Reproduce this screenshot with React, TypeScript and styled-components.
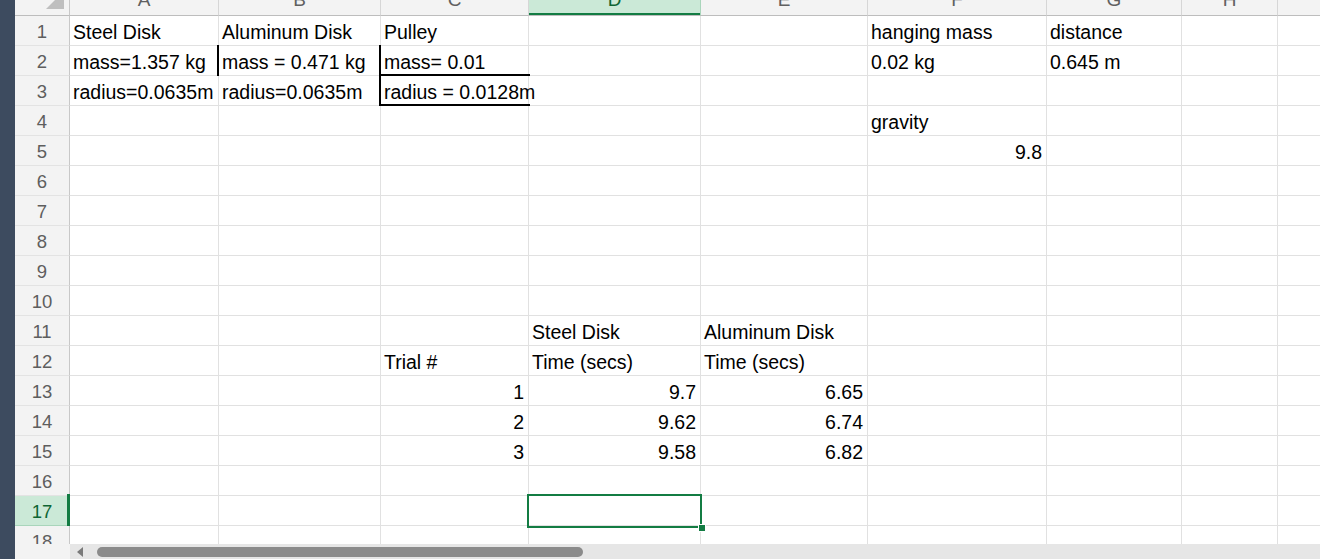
import React from 'react';
import styled, { createGlobalStyle, css } from 'styled-components';

const GlobalStyle = createGlobalStyle`
  html, body { margin: 0; padding: 0; background: #ffffff; }
  body { font-family: 'Liberation Sans', Arial, sans-serif; overflow: hidden; }
`;

const GREEN = '#137c43';
const GREEN_BG = '#cbe9d7';
const GRID = '#e1e1e1';

type Col = { key: string; width: number };
const COLS: Col[] = [
  { key: 'A', width: 149 },
  { key: 'B', width: 162 },
  { key: 'C', width: 148 },
  { key: 'D', width: 172 },
  { key: 'E', width: 167 },
  { key: 'F', width: 179 },
  { key: 'G', width: 135 },
  { key: 'H', width: 96 },
  { key: 'I', width: 120 },
];

type CellData = {
  text: string;
  right?: boolean;
  tl?: boolean;
  tr?: boolean;
  tb?: boolean;
};

const DATA: Record<number, Record<string, CellData>> = {
  1: {
    A: { text: 'Steel Disk' },
    B: { text: 'Aluminum Disk' },
    C: { text: 'Pulley' },
    F: { text: 'hanging mass' },
    G: { text: 'distance' },
  },
  2: {
    A: { text: 'mass=1.357 kg', tr: true },
    B: { text: 'mass = 0.471 kg' },
    C: { text: 'mass= 0.01', tl: true, tb: true },
    F: { text: '0.02 kg' },
    G: { text: '0.645 m' },
  },
  3: {
    A: { text: 'radius=0.0635m' },
    B: { text: 'radius=0.0635m' },
    C: { text: 'radius = 0.0128m', tl: true, tb: true },
  },
  4: { F: { text: 'gravity' } },
  5: { F: { text: '9.8', right: true } },
  11: { D: { text: 'Steel Disk' }, E: { text: 'Aluminum Disk' } },
  12: { C: { text: 'Trial #' }, D: { text: 'Time (secs)' }, E: { text: 'Time (secs)' } },
  13: { C: { text: '1', right: true }, D: { text: '9.7', right: true }, E: { text: '6.65', right: true } },
  14: { C: { text: '2', right: true }, D: { text: '9.62', right: true }, E: { text: '6.74', right: true } },
  15: { C: { text: '3', right: true }, D: { text: '9.58', right: true }, E: { text: '6.82', right: true } },
};

const ROW_COUNT = 18;
const ACTIVE_ROW = 17;
const ACTIVE_COL = 'D';

const Page = styled.div`
  display: flex;
  width: 1320px;
  height: 559px;
  overflow: hidden;
  background: #ffffff;
`;

const SideStrip = styled.div`
  width: 15px;
  flex: none;
  background: #3d4b5f;
`;

const Main = styled.div`
  flex: 1;
  display: flex;
  flex-direction: column;
  min-width: 0;
`;

const Viewport = styled.div`
  height: 544px;
  flex: none;
  overflow: hidden;
`;

const SheetGrid = styled.div`
  display: grid;
  grid-template-columns: 55px ${COLS.map((c) => `${c.width}px`).join(' ')};
  grid-template-rows: 16px repeat(${ROW_COUNT}, 30px);
  font-family: 'Liberation Sans', Arial, sans-serif;
`;

const Corner = styled.div`
  background: #f3f3f3;
  border-right: 1px solid #c8c8c8;
  border-bottom: 1px solid #bdbdbd;
  display: flex;
  justify-content: flex-end;
  align-items: flex-start;
  padding-right: 5px;
  overflow: hidden;
`;

const ColHeader = styled.div<{ $active?: boolean }>`
  position: relative;
  background: ${(p) => (p.$active ? GREEN_BG : '#f3f3f3')};
  border-right: 1px solid ${(p) => (p.$active ? '#a9d5bb' : '#d6d6d6')};
  border-bottom: 1px solid #bdbdbd;
  color: ${(p) => (p.$active ? '#0e6534' : '#606060')};
  font-size: 19px;
  line-height: 15px;
  text-align: center;
  overflow: hidden;
  ${(p) =>
    p.$active &&
    css`
      &::after {
        content: '';
        position: absolute;
        left: -3px;
        right: -2px;
        bottom: -1px;
        height: 3px;
        background: ${GREEN};
      }
    `}
`;

const ColLabel = styled.span`
  display: block;
  transform: translateY(-8px);
`;

const RowHeader = styled.div<{ $active?: boolean }>`
  position: relative;
  background: ${(p) => (p.$active ? GREEN_BG : '#f3f3f3')};
  border-right: 1px solid #c8c8c8;
  border-bottom: 1px solid ${(p) => (p.$active ? '#a9d5bb' : '#e3e3e3')};
  color: ${(p) => (p.$active ? '#0e6534' : '#5e5e5e')};
  font-size: 18.5px;
  line-height: 22px;
  display: flex;
  justify-content: center;
  align-items: flex-end;
  padding-bottom: 2px;
  ${(p) =>
    p.$active &&
    css`
      &::after {
        content: '';
        position: absolute;
        right: -1px;
        top: -2px;
        bottom: -3px;
        width: 3px;
        background: ${GREEN};
      }
    `}
`;

const Cell = styled.div<{ $right?: boolean; $tl?: boolean; $tr?: boolean; $tb?: boolean }>`
  position: relative;
  display: flex;
  align-items: flex-end;
  justify-content: ${(p) => (p.$right ? 'flex-end' : 'flex-start')};
  padding: 0 4px 2px 3px;
  border-right: 1px solid ${GRID};
  border-bottom: 1px solid ${GRID};
  white-space: nowrap;
  min-width: 0;
  font-size: 19.5px;
  line-height: 22px;
  color: #000000;
  ${(p) =>
    (p.$tl || p.$tr || p.$tb) &&
    css`
      &::after {
        content: '';
        position: absolute;
        pointer-events: none;
        top: -1px;
        bottom: -1px;
        left: ${p.$tl ? '-2px' : '0'};
        right: ${p.$tr ? '-1px' : p.$tb ? '-2px' : '0'};
        border-left: ${p.$tl ? '2px solid #000' : '0'};
        border-right: ${p.$tr ? '2px solid #000' : '0'};
        border-bottom: ${p.$tb ? '2px solid #000' : '0'};
        z-index: 1;
      }
    `}
`;

const CellText = styled.span`
  display: block;
`;

const SelectionFrame = styled.div`
  position: absolute;
  top: -2px;
  left: -2px;
  right: -2px;
  bottom: -3px;
  border: 2px solid ${GREEN};
  z-index: 2;
  pointer-events: none;
`;

const FillHandle = styled.div`
  position: absolute;
  right: -6px;
  bottom: -6px;
  width: 6px;
  height: 6px;
  background: ${GREEN};
  border: 1px solid #ffffff;
`;

const BottomBar = styled.div`
  height: 15px;
  flex: none;
  display: flex;
`;

const BottomFiller = styled.div`
  width: 55px;
  flex: none;
  background: #f3f3f3;
`;

const Track = styled.div`
  flex: 1;
  background: #e6e6e6;
  display: flex;
  align-items: center;
  padding-left: 7px;
`;

const Thumb = styled.div`
  margin-left: 14px;
  width: 486px;
  height: 10px;
  border-radius: 5px;
  background: #8b8b8b;
`;

const ArrowIcon = () => (
  <svg width="6" height="10" viewBox="0 0 6 10">
    <polygon points="6,0 6,10 0,5" fill="#7a7a7a" />
  </svg>
);

const CornerTriangle = () => (
  <svg width="18" height="9" viewBox="0 0 18 9">
    <polygon points="0,9 18,9 18,-9" fill="#bfbfbf" />
  </svg>
);

export default function App() {
  const rows = Array.from({ length: ROW_COUNT }, (_, i) => i + 1);
  return (
    <>
      <GlobalStyle />
      <Page>
        <SideStrip />
        <Main>
          <Viewport>
            <SheetGrid>
              <Corner>
                <CornerTriangle />
              </Corner>
              {COLS.map((c) => (
                <ColHeader key={c.key} $active={c.key === ACTIVE_COL}>
                  <ColLabel>{c.key}</ColLabel>
                </ColHeader>
              ))}
              {rows.map((r) => (
                <React.Fragment key={r}>
                  <RowHeader $active={r === ACTIVE_ROW}>{r}</RowHeader>
                  {COLS.map((c) => {
                    const d = DATA[r]?.[c.key];
                    const active = r === ACTIVE_ROW && c.key === ACTIVE_COL;
                    return (
                      <Cell key={c.key} $right={d?.right} $tl={d?.tl} $tr={d?.tr} $tb={d?.tb}>
                        {d && <CellText>{d.text}</CellText>}
                        {active && (
                          <SelectionFrame>
                            <FillHandle />
                          </SelectionFrame>
                        )}
                      </Cell>
                    );
                  })}
                </React.Fragment>
              ))}
            </SheetGrid>
          </Viewport>
          <BottomBar>
            <BottomFiller />
            <Track>
              <ArrowIcon />
              <Thumb />
            </Track>
          </BottomBar>
        </Main>
      </Page>
    </>
  );
}
